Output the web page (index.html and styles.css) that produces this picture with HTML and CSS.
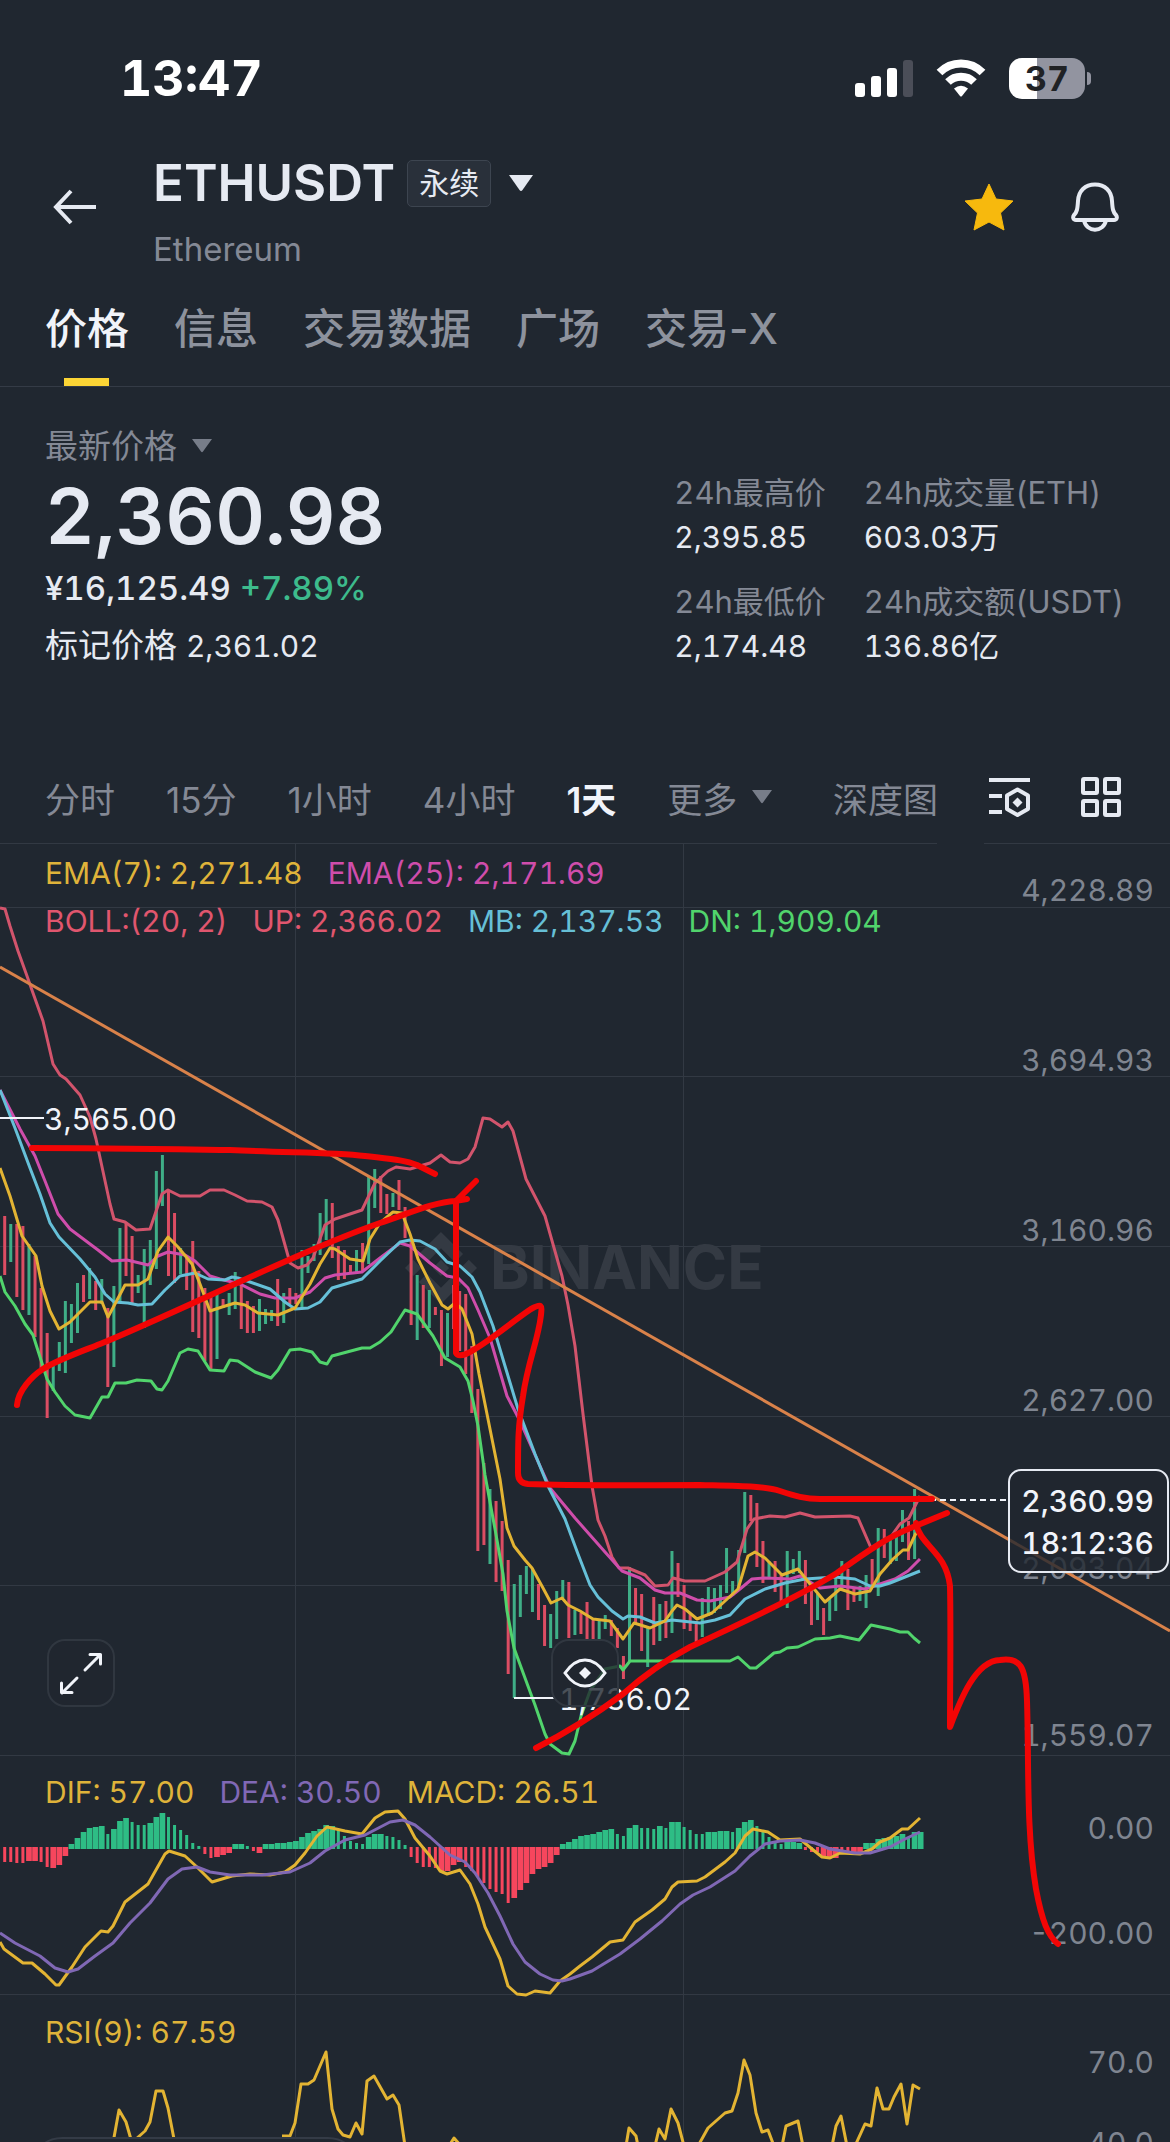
FILE: index.html
```
<!DOCTYPE html>
<html lang="zh-CN">
<head>
  <meta charset="UTF-8">
  <meta name="viewport" content="width=device-width, initial-scale=1.0">
  <title>ETHUSDT 永续</title>
  <link rel="stylesheet" href="styles.css">
</head>
<body>
  <div class="status-bar">
    <span class="clock">13:47</span>
    <div class="status-icons">
      <svg class="signal" viewBox="0 0 58 38" width="58" height="38">
        <rect x="0" y="24" width="10" height="14" rx="3" fill="#fff"/>
        <rect x="16" y="17" width="10" height="21" rx="3" fill="#fff"/>
        <rect x="32" y="9" width="10" height="29" rx="3" fill="#fff"/>
        <rect x="48" y="1" width="10" height="37" rx="3" fill="#4b4e58"/>
      </svg>
      <svg class="wifi" viewBox="0 0 52 38" width="52" height="38">
        <path d="M4.500 13.500 A30 30 0 0 1 47.500 13.500" fill="none" stroke="#fff" stroke-width="8"/>
        <path d="M13 23 A18.500 18.500 0 0 1 39 23" fill="none" stroke="#fff" stroke-width="8"/>
        <path d="M19 29.500 Q26 24 33 29.500 L27 37 Q26 38 25 37 Z" fill="#fff"/>
      </svg>
      <div class="battery"><span>37</span></div>
    </div>
  </div>

  <header class="header">
    <button class="icon-btn" aria-label="返回">
      <svg viewBox="0 0 44 36" width="44" height="36" fill="none" stroke="#e6eaf2" stroke-width="4">
        <path d="M43 18 H3 M18 2 L3 18 L18 34"/>
      </svg>
    </button>
    <div class="pair">
      <div class="pair-row">
        <h1>ETHUSDT</h1>
        <span class="badge">永续</span>
        <svg class="pair-arrow" viewBox="0 0 26 18" width="26" height="18"><path d="M1 1 H25 L14.500 16 Q13 18 11.500 16 Z" fill="#e6eaf2"/></svg>
      </div>
      <p class="pair-name">Ethereum</p>
    </div>
    <div class="header-actions">
      <button class="icon-btn" aria-label="收藏">
        <svg viewBox="0 0 50 50" width="50" height="50">
          <path d="M25 2 L32 17 L49 19 L36.500 31 L40 48 L25 40 L10 48 L13.500 31 L1 19 L18 17 Z" fill="#f7b90d" stroke="#f7b90d" stroke-width="1" stroke-linejoin="round"/>
        </svg>
      </button>
      <button class="icon-btn" aria-label="提醒">
        <svg viewBox="0 0 48 50" width="48" height="50" fill="none" stroke="#e6eaf2" stroke-width="4" stroke-linejoin="round">
          <path d="M24 2.500 C14 2.500 7.500 9 7 19 C6.500 27 6 30 3 33 C1.500 35 2 38 5 38 H43 C46 38 46.500 35 45 33 C42 30 41.500 27 41 19 C40.500 9 34 2.500 24 2.500 Z"/>
          <path d="M13 38 C15 51 33 51 35 38"/>
        </svg>
      </button>
    </div>
  </header>

  <nav class="tabs">
    <a class="active" href="#">价格</a>
    <a href="#">信息</a>
    <a href="#">交易数据</a>
    <a href="#">广场</a>
    <a href="#">交易-X</a>
  </nav>

  <section class="summary">
    <div class="price-block">
      <button class="price-type">最新价格 <svg viewBox="0 0 22 14" width="22" height="14"><path d="M1 0 H21 L12 12.500 Q11 14 10 12.500 Z" fill="#777d89"/></svg></button>
      <div class="price">2,360.98</div>
      <div class="fiat">¥16,125.49 <span class="up">+7.89%</span></div>
      <div class="mark"><span>标记价格</span> <span class="num">2,361.02</span></div>
    </div>
    <dl class="stats">
      <div><dt>24h最高价</dt><dd>2,395.85</dd></div>
      <div><dt>24h成交量(ETH)</dt><dd>603.03万</dd></div>
      <div><dt>24h最低价</dt><dd>2,174.48</dd></div>
      <div><dt>24h成交额(USDT)</dt><dd>136.86亿</dd></div>
    </dl>
  </section>

  <div class="intervals">
    <button>分时</button>
    <button>15分</button>
    <button>1小时</button>
    <button>4小时</button>
    <button class="active">1天</button>
    <button class="more">更多 <svg viewBox="0 0 22 14" width="22" height="14"><path d="M1 0 H21 L12 12.500 Q11 14 10 12.500 Z" fill="#777d89"/></svg></button>
    <button class="depth">深度图</button>
    <div class="tools">
      <button aria-label="指标设置">
        <svg viewBox="0 0 42 40" width="42" height="40" fill="none" stroke="#e6eaf2" stroke-width="4">
          <path d="M0 3 H41 M0 19 H13 M0 35 H13"/>
          <path d="M28.500 12.500 L39 18.500 V32 L28.500 38 L18 32 V18.500 Z" stroke-linejoin="round"/>
          <path d="M28.500 20.500 L33.500 25.500 L28.500 30.500 L23.500 25.500 Z" fill="#e6eaf2" stroke="none"/>
        </svg>
      </button>
      <button aria-label="布局">
        <svg viewBox="0 0 40 40" width="40" height="40" fill="none" stroke="#e6eaf2" stroke-width="4">
          <rect x="2" y="2" width="14" height="14" rx="1"/><rect x="24" y="2" width="14" height="14" rx="1"/>
          <rect x="2" y="24" width="14" height="14" rx="1"/><rect x="24" y="24" width="14" height="14" rx="1"/>
        </svg>
      </button>
    </div>
  </div>

  <main class="chart">
    <svg class="plot" viewBox="0 842 1170 1300">
      <g class="grid">
        <path d="M0 842.500 H937 M984 842.500 H1170 M0 906.500 H1170 M0 1075.500 H1170 M0 1245.500 H1170 M0 1415.500 H1170 M0 1584.500 H1170 M0 1754.500 H1170 M0 1993.500 H1170"/>
        <path d="M295.500 842 V2142 M683.500 842 V2142"/>
      </g>

      <g class="watermark">
        <path transform="translate(405 1231) scale(3)" d="M16.624 13.920l2.717 2.715-7.353 7.353-7.353-7.352 2.717-2.716 4.636 4.659 4.636-4.659zm4.637-4.636L24 12l-2.715 2.716L18.568 12l2.693-2.716zm-9.272 0l2.716 2.692-2.716 2.717L9.272 12l2.717-2.716zm-9.273 0L5.409 12l-2.691 2.692L0 12l2.716-2.716zM11.988.011l7.353 7.329-2.717 2.715-4.636-4.635-4.635 4.659-2.718-2.715 7.353-7.353z"/>
        <text x="490" y="1288">BINANCE</text>
      </g>

      <g class="axis">
        <text x="1154" y="900">4,228.89</text>
        <text x="1154" y="1070">3,694.93</text>
        <text x="1154" y="1240">3,160.96</text>
        <text x="1154" y="1410">2,627.00</text>
        <text x="1154" y="1578">2,093.04</text>
        <text x="1154" y="1745">1,559.07</text>
        <text x="1154" y="1838">0.00</text>
        <text x="1154" y="1943">-200.00</text>
        <text x="1154" y="2072">70.0</text>
        <text x="1154" y="2153">40.0</text>
      </g>

      <g id="candles"></g>
      <g id="macd"></g>

      <polyline class="line up-band" points="0,907 5,908 10,925 18,950 27,975 33,992 43,1020 53,1063 60,1074 66,1078 80,1094 90,1116 96,1138 110,1203 114,1218 125,1221 136,1229 150,1228 162,1193 168,1189 180,1195 200,1195 210,1189 224,1189 235,1194 247,1200 262,1201 272,1206 278,1219 290,1262 298,1267 307,1264 313,1257 325,1224 335,1218 362,1209 375,1182 388,1170 396,1166 410,1168 430,1162 441,1154 450,1161 460,1162 468,1158 475,1146 483,1117 490,1118 502,1126 508,1121 513,1130 526,1178 545,1215 562,1275 568,1304 575,1345 583,1413 592,1485 598,1519 605,1535 612,1556 619,1567 628,1567 645,1574 655,1585 668,1584 673,1577 685,1580 705,1580 725,1571 737,1561 747,1528 754,1518 770,1515 785,1516 800,1512 815,1516 850,1515 858,1517 871,1547 890,1537 900,1523 909,1517 916,1503 920,1495"/>
      <polyline class="line down-band" points="0,1275 5,1291 15,1305 25,1323 33,1334 40,1356 47,1378 55,1391 65,1405 75,1414 90,1417 102,1396 108,1396 115,1382 126,1382 137,1379 151,1380 157,1388 162,1389 168,1380 180,1352 188,1348 198,1350 210,1369 224,1370 230,1359 238,1360 255,1371 271,1377 278,1369 290,1349 300,1348 312,1351 320,1361 327,1363 332,1355 362,1347 370,1347 380,1341 391,1331 405,1309 417,1313 433,1335 445,1357 460,1366 468,1380 473,1400 478,1425 485,1474 495,1528 503,1573 507,1610 514,1647 525,1677 535,1704 545,1733 550,1743 562,1752 569,1753 575,1740 581,1715 590,1690 605,1668 620,1665 623,1669 630,1660 730,1660 738,1656 750,1667 756,1667 774,1652 780,1651 787,1647 798,1646 815,1638 830,1637 840,1635 859,1639 871,1624 890,1628 900,1631 908,1631 914,1637 920,1642"/>
      <polyline class="line ema25" points="0,1089 20,1128 35,1155 45,1180 58,1213 70,1228 98,1249 112,1260 127,1259 148,1264 158,1255 168,1251 185,1254 195,1260 210,1275 220,1278 240,1283 260,1293 275,1297 295,1297 310,1291 325,1277 335,1274 362,1271 380,1257 400,1242 410,1245 430,1262 447,1275 458,1277 468,1287 478,1309 490,1337 507,1395 519,1418 540,1465 550,1487 575,1517 605,1551 622,1570 640,1577 655,1589 665,1592 680,1592 697,1599 710,1600 730,1596 740,1588 752,1578 765,1577 790,1578 800,1575 820,1587 840,1585 865,1588 880,1583 895,1578 908,1570 920,1558"/>
      <polyline class="line mid-band" points="0,1089 15,1127 30,1167 40,1193 50,1222 59,1236 80,1258 95,1276 105,1293 114,1301 128,1302 138,1304 152,1303 165,1289 180,1275 195,1272 208,1278 225,1279 232,1276 238,1277 250,1281 270,1288 285,1301 295,1308 308,1307 320,1301 332,1287 362,1278 380,1260 400,1241 410,1239 420,1240 435,1248 447,1261 460,1265 472,1276 480,1291 493,1325 505,1365 518,1408 535,1453 548,1485 565,1518 578,1553 590,1584 598,1596 612,1610 623,1618 628,1615 640,1616 655,1622 672,1619 700,1622 715,1619 730,1614 745,1598 765,1588 785,1582 805,1578 835,1576 855,1578 870,1585 880,1585 890,1582 905,1576 920,1570"/>
      <polyline class="line ema7" points="0,1167 10,1195 22,1235 36,1255 42,1285 50,1310 59,1328 70,1321 90,1301 102,1301 108,1316 115,1303 125,1284 138,1284 148,1278 158,1250 168,1236 178,1246 192,1263 200,1283 210,1310 222,1306 235,1302 245,1304 258,1312 278,1314 295,1307 310,1283 320,1263 330,1247 335,1248 350,1258 363,1260 370,1238 380,1222 393,1211 402,1212 410,1233 418,1258 430,1282 442,1304 448,1308 455,1302 462,1308 472,1333 479,1373 491,1433 500,1478 507,1527 514,1545 525,1559 532,1567 543,1587 551,1602 562,1597 568,1604 580,1610 593,1618 610,1620 623,1638 634,1622 650,1627 665,1620 672,1610 677,1604 685,1608 697,1618 712,1612 725,1600 738,1588 748,1555 755,1551 765,1557 782,1574 798,1568 810,1583 825,1601 840,1588 855,1593 870,1590 880,1573 893,1558 903,1549 908,1549 916,1532"/>

      <polyline class="line ema7" points="0,1941 4,1948 23,1962 32,1962 45,1973 56,1984 59,1984 72,1966 85,1946 101,1930 108,1931 113,1925 125,1901 148,1883 165,1853 169,1850 185,1855 197,1866 212,1881 232,1875 250,1873 270,1874 285,1871 295,1864 305,1852 317,1835 327,1826 345,1830 362,1833 375,1817 385,1811 398,1810 405,1818 415,1837 430,1855 440,1870 447,1873 460,1869 470,1883 478,1903 485,1926 500,1958 508,1985 517,1993 526,1994 535,1990 550,1992 560,1980 570,1973 580,1965 592,1956 610,1941 623,1939 635,1921 652,1909 665,1898 672,1886 678,1881 697,1880 705,1876 725,1861 735,1852 745,1835 753,1828 768,1831 780,1839 800,1838 812,1848 822,1856 830,1857 840,1852 860,1853 872,1848 880,1841 890,1837 902,1828 908,1828 920,1817"/>
      <polyline class="line dea" points="0,1932 15,1942 40,1955 55,1967 68,1971 78,1968 95,1955 113,1942 130,1922 150,1902 168,1878 182,1868 197,1866 210,1871 230,1874 262,1874 290,1871 310,1862 325,1850 345,1839 365,1834 390,1821 403,1819 415,1824 430,1836 450,1854 465,1861 475,1872 488,1892 500,1915 513,1943 525,1961 540,1973 553,1979 562,1980 570,1978 592,1970 620,1953 640,1938 662,1920 680,1903 693,1894 710,1886 735,1870 750,1855 765,1843 780,1840 800,1839 815,1842 830,1848 855,1852 870,1852 890,1846 905,1838 920,1831"/>
      <path class="line ema7" d="M113 2142 L119 2109 L126 2121 L132 2142 M136 2138 L145 2130 L150 2121 L156 2090 L163 2090 L168 2107 L174 2138 M282 2135 H290 L295 2122 L301 2083 L308 2083 L314 2079 L326 2051 L332 2108 L338 2128 L343 2134 L350 2136 L356 2122 L362 2133 L367 2080 L374 2075 L387 2098 L393 2094 L399 2104 L405 2145 M449 2145 L454 2137 L461 2145 M626 2145 L629 2127 L636 2135 L638 2145 M655 2145 L659 2128 L665 2138 L671 2108 L678 2122 L684 2145 M698 2145 L708 2127 L725 2112 L732 2110 L738 2092 L744 2059 L750 2074 L756 2112 L762 2131 L768 2129 L774 2145 M782 2145 L786 2125 L798 2120 L803 2145 M832 2145 L836 2125 L841 2115 L847 2145 M855 2145 L865 2123 L871 2125 L877 2087 L883 2108 L889 2108 L894 2096 L901 2083 L907 2123 L913 2084 L920 2088"/>

      <path class="trend" d="M0 966 L1170 1630"/>

      <g class="marker">
        <path d="M0 1117 H44 M514 1697 H554"/>
        <text x="44" y="1129">3,565.00</text>
        <text x="559" y="1709">1,736.02</text>
      </g>

      <path class="last-line" d="M930 1499 H1008"/>
      <g class="last-price">
        <rect x="1009" y="1469" width="159" height="102" rx="12"/>
        <text x="1154" y="1511">2,360.99</text>
        <text x="1154" y="1553">18:12:36</text>
      </g>
      <rect class="sheet" x="36" y="2137" width="318" height="40" rx="26"/>
    </svg>

    <div class="legend legend-main">
      <div><span class="c-yellow">EMA(7): 2,271.48</span><span class="c-pink">EMA(25): 2,171.69</span></div>
      <div><span class="c-red">BOLL:(20, 2)</span><span class="c-red">UP: 2,366.02</span><span class="c-cyan">MB: 2,137.53</span><span class="c-green">DN: 1,909.04</span></div>
    </div>
    <div class="legend legend-macd">
      <div><span class="c-yellow">DIF: 57.00</span><span class="c-purple">DEA: 30.50</span><span class="c-yellow">MACD: 26.51</span></div>
    </div>
    <div class="legend legend-rsi">
      <div><span class="c-yellow">RSI(9): 67.59</span></div>
    </div>

    <button class="chart-btn expand-btn" aria-label="全屏">
      <svg viewBox="0 0 68 68" width="68" height="68" fill="none" stroke="#f1f4fa" stroke-width="3" stroke-linecap="round" stroke-linejoin="round">
        <path d="M38 31 L53 16 M43 15.500 H53.500 V25 M30 39 L15 54 M14.500 44 V53.500 H25"/>
      </svg>
    </button>
    <button class="chart-btn eye-btn" aria-label="显示">
      <svg viewBox="0 0 68 68" width="68" height="68" fill="none" stroke="#f1f4fa" stroke-width="3">
        <path d="M14 34 Q23 21 34 21 Q45 21 54 34 Q45 47 34 47 Q23 47 14 34 Z"/>
        <path d="M34 28 L40 34 L34 40 L28 34 Z" fill="#f1f4fa" stroke="none"/>
      </svg>
    </button>

    <!-- hand drawn notes, above everything else -->
    <svg class="notes" viewBox="0 842 1170 1300">
      <path d="M32 1147 C100 1147 160 1148 230 1149 C290 1152 330 1151 365 1155 C390 1158 405 1159 417 1164 L435 1173"/>
      <path d="M17 1404 C18 1390 32 1375 43 1368 C55 1360 80 1351 100 1343 C180 1310 300 1250 380 1222 C410 1212 435 1201 455 1200 L467 1198 M456 1200 L476 1180"/>
      <path d="M456 1200 V1352 Q458 1356 466 1353 C485 1344 510 1322 531 1308 C542 1302 542 1304 541 1314 C538 1340 528 1360 523 1395 C518 1425 518 1440 518 1472 Q518 1482 528 1483 C580 1485 640 1484 700 1484 C740 1485 765 1485 780 1490 C795 1495 805 1498 820 1498 H932"/>
      <path d="M536 1747 C570 1730 600 1710 623 1693 C640 1678 660 1662 690 1646 C740 1623 800 1595 837 1572 C870 1548 890 1535 913 1526 L947 1512"/>
      <path d="M916 1522 C920 1545 946 1550 950 1585 C951 1630 950 1680 950 1726 C960 1700 975 1660 1000 1659 C1020 1656 1026 1665 1027 1700 C1029 1760 1026 1830 1036 1888 C1042 1920 1048 1935 1058 1943"/>
    </svg>
  </main>

  <script src="chart.js"></script>
</body>
</html>
```
FILE: styles.css
```
* {
  box-sizing: border-box;
}

body {
  margin: 0;
  background-color: #202730;
  color: #e6eaf2;
  font-family: Inter, "Noto Sans CJK SC", sans-serif;
  font-size: 30px;
  font-variant-numeric: tabular-nums;
}

h1, p, dl, dd {
  margin: 0;
}

button {
  padding: 0;
  border: none;
  background: none;
  color: inherit;
  font: inherit;
}

svg {
  display: block;
}

/* status bar */
.status-bar {
  display: flex;
  justify-content: space-between;
  align-items: center;
  height: 156px;
  padding: 0 79px 0 120px;
}

.clock {
  font-size: 50px;
  font-weight: 700;
  color: #fff;
}

.status-icons {
  display: flex;
  align-items: center;
  gap: 22px;
}

.battery {
  position: relative;
  width: 76px;
  height: 41px;
  margin-right: 6px;
  border-radius: 13px;
  background: linear-gradient(to right, #fff 37%, #9294a0 37%);
  color: #202225;
  font-size: 34px;
  font-weight: 700;
  line-height: 41px;
  text-align: center;
}

.battery::after {
  content: "";
  position: absolute;
  right: -6px;
  top: 14px;
  width: 4px;
  height: 13px;
  border-radius: 0 5px 5px 0;
  background-color: #9294a0;
}

/* header */
.header {
  display: flex;
  align-items: flex-start;
  height: 120px;
  padding: 0 51px 0 53px;
}

.icon-btn {
  display: flex;
  align-items: center;
  height: 102px;
}

.pair {
  margin-left: 56px;
}

.pair-row {
  display: flex;
  align-items: center;
  height: 54px;
}

.pair h1 {
  font-size: 51px;
  font-weight: 600;
  line-height: 54px;
}

.badge {
  margin: 0 17px 0 12px;
  padding: 0 11px;
  border: 1px solid #3d4550;
  border-radius: 5px;
  background-color: #29303a;
  font-size: 30px;
  line-height: 45px;
}

.pair-name {
  margin-top: 19px;
  color: #848995;
  font-size: 33px;
  line-height: 40px;
}

.header-actions {
  display: flex;
  gap: 57px;
  margin-left: auto;
}

/* tabs */
.tabs {
  display: flex;
  gap: 45px;
  height: 111px;
  padding: 0 45px;
  border-bottom: 1px solid #343b46;
  font-variant-numeric: normal;
}

.tabs a {
  position: relative;
  color: #8d929d;
  font-size: 42px;
  font-weight: 500;
  line-height: 106px;
  text-decoration: none;
}

.tabs .active {
  color: #f1f4fa;
}

.tabs .active::after {
  content: "";
  position: absolute;
  left: 50%;
  bottom: 0;
  width: 45px;
  height: 8px;
  margin-left: -23px;
  background-color: #fcd535;
}

/* price summary */
.summary {
  display: flex;
  justify-content: space-between;
  padding: 39px 46px 87px 45px;
}

.price-type {
  display: flex;
  align-items: center;
  gap: 14px;
  color: #848995;
  font-size: 33px;
  line-height: 40px;
}

.price {
  font-size: 77px;
  font-weight: 600;
  line-height: 100px;
}

.fiat {
  font-size: 33px;
  font-weight: 500;
  line-height: 44px;
}

.up {
  color: #3dbb8c;
}

.mark {
  margin-top: 13px;
  font-size: 33px;
  line-height: 44px;
}

.mark .num {
  font-size: 30px;
}

.stats {
  display: grid;
  grid-template-columns: auto auto;
  gap: 21px 38px;
  align-self: flex-end;
}

.stats dt {
  color: #848995;
  font-size: 31px;
  line-height: 44px;
}

.stats dd {
  font-size: 30px;
  line-height: 44px;
}

/* interval bar */
.intervals {
  display: flex;
  align-items: center;
  gap: 51px;
  height: 88px;
  padding: 0 49px 4px 45px;
  color: #848995;
  font-size: 35px;
  font-variant-numeric: normal;
  white-space: nowrap;
}

.intervals .active {
  color: #f1f4fa;
  font-weight: 600;
}

.intervals .more {
  display: flex;
  align-items: center;
  gap: 14px;
}

.intervals .depth {
  margin-left: auto;
}

.tools {
  display: flex;
  gap: 50px;
}

/* chart */
.chart {
  position: relative;
  overflow: hidden;
}

.plot,
.notes {
  width: 100%;
  height: auto;
}

.notes {
  position: absolute;
  left: 0;
  top: 0;
  fill: none;
  stroke: #f20505;
  stroke-width: 6;
  stroke-linejoin: round;
  stroke-linecap: round;
  pointer-events: none;
}

.grid {
  fill: none;
  stroke: #323943;
}

.watermark {
  fill: #343a43;
}

.watermark text {
  font-size: 60px;
  font-weight: 700;
}

.axis {
  fill: #7f8590;
  text-anchor: end;
}

.line {
  fill: none;
  stroke-width: 3;
  stroke-linejoin: round;
}

.up-band { stroke: #d2546c; }
.down-band { stroke: #51d46c; }
.mid-band { stroke: #66c0d8; }
.ema7 { stroke: #e3b433; }
.ema25 { stroke: #cf4dab; }
.dea { stroke: #8068b5; }

.candle-up { fill: #3fae87; }
.candle-down { fill: #dc4d63; }
.bar-up { fill: #2ebd85; }
.bar-down { fill: #f6465d; }

.trend {
  stroke: #d9824a;
  stroke-width: 3;
}

.marker {
  fill: #f1f4fa;
}

.marker path {
  stroke: #f1f4fa;
  stroke-width: 2;
}

.last-line {
  stroke: #f1f4fa;
  stroke-width: 2;
  stroke-dasharray: 6 4;
}

.last-price {
  fill: #f1f4fa;
  font-weight: 500;
  text-anchor: end;
}

.last-price rect {
  fill: #202730;
  fill-opacity: 0.8;
  stroke: #e6eaf2;
  stroke-width: 2;
}

.sheet {
  fill: #202730;
  stroke: #343b46;
  stroke-width: 2;
}

.legend {
  position: absolute;
  left: 45px;
  line-height: 48px;
}

.legend div {
  display: flex;
  gap: 25px;
  white-space: nowrap;
}

.legend-main { top: 6px; }
.legend-macd { top: 925px; }
.legend-rsi { top: 1165px; }

.c-yellow { color: #dfb33a; }
.c-pink { color: #cf4dab; }
.c-red { color: #e0566e; }
.c-cyan { color: #66bfd6; }
.c-green { color: #51d46c; }
.c-purple { color: #8068b5; }

.chart-btn {
  position: absolute;
  top: 796px;
  width: 68px;
  height: 68px;
  border-radius: 18px;
  background-color: rgba(32, 39, 48, 0.8);
  box-shadow: inset 0 0 0 2px #303740;
}

.expand-btn { left: 47px; }

.eye-btn {
  left: 50%;
  margin-left: -34px;
}
```
FILE: chart.js
```
// daily bars: [high y, low y, 1 = up / 0 = down]
const candles = [
  [1215,1274,0],[1223,1261,1],[1223,1296,0],[1225,1309,0],[1243,1314,1],[1255,1336,0],[1287,1367,0],[1332,1417,0],[1362,1390,1],[1341,1370,1],
  [1300,1372,1],[1303,1342,1],[1282,1332,1],[1274,1301,0],[1267,1298,1],[1280,1309,0],[1278,1303,1],[1307,1386,0],[1285,1366,1],[1227,1300,1],
  [1222,1275,0],[1235,1303,0],[1274,1292,1],[1248,1327,1],[1239,1284,1],[1170,1268,1],[1154,1205,1],[1190,1275,0],[1212,1282,0],[1247,1273,1],
  [1255,1289,0],[1240,1331,0],[1270,1337,0],[1287,1360,0],[1293,1368,0],[1293,1358,1],[1298,1307,0],[1292,1314,1],[1271,1308,1],[1277,1328,0],
  [1300,1332,0],[1305,1332,0],[1298,1330,1],[1308,1323,1],[1309,1320,1],[1278,1325,0],[1292,1322,1],[1287,1303,0],[1292,1303,0],[1249,1307,1],
  [1255,1272,1],[1243,1260,1],[1212,1254,1],[1198,1239,1],[1202,1257,0],[1245,1279,0],[1249,1278,0],[1264,1273,0],[1249,1273,1],[1242,1270,0],
  [1175,1263,1],[1168,1207,1],[1175,1212,0],[1193,1213,0],[1192,1206,1],[1179,1209,0],[1206,1237,0],[1240,1324,0],[1274,1339,1],[1284,1327,0],
  [1289,1327,1],[1306,1314,0],[1309,1365,0],[1312,1356,1],[1284,1328,0],[1290,1350,0],[1293,1373,0],[1345,1412,0],[1388,1550,0],[1462,1544,0],
  [1488,1563,1],[1500,1581,0],[1520,1590,0],[1559,1673,0],[1583,1697,1],[1574,1616,1],[1565,1593,1],[1567,1611,1],[1583,1619,0],[1604,1645,0],
  [1613,1647,1],[1590,1638,1],[1579,1597,1],[1581,1637,0],[1609,1634,1],[1612,1633,0],[1601,1638,0],[1617,1638,0],[1620,1638,1],[1614,1628,1],
  [1619,1635,0],[1627,1647,0],[1655,1678,0],[1566,1660,1],[1587,1622,0],[1593,1650,0],[1627,1666,1],[1596,1644,0],[1603,1640,1],[1600,1637,0],
  [1550,1632,1],[1562,1596,0],[1584,1628,0],[1612,1630,0],[1620,1642,0],[1597,1636,1],[1586,1615,1],[1587,1612,1],[1584,1608,1],[1547,1592,1],
  [1580,1595,1],[1549,1588,1],[1491,1552,1],[1494,1520,0],[1502,1566,0],[1540,1582,0],[1560,1577,1],[1560,1591,0],[1572,1600,0],[1550,1607,1],
  [1558,1573,1],[1550,1572,1],[1559,1603,0],[1586,1624,0],[1593,1619,1],[1607,1634,0],[1597,1620,1],[1575,1610,1],[1560,1590,1],[1568,1609,0],
  [1588,1601,0],[1585,1600,1],[1574,1607,1],[1558,1587,0],[1527,1595,1],[1528,1557,0],[1535,1563,1],[1532,1560,1],[1509,1541,1],[1520,1559,0],
  [1488,1558,1]
];

const macd = ('-15t -15t -16t -16t -14 -14 -15t -20t -21 -18 -9 5 11 17 21 22 23 15t 20 28 31 27t 24t 24t 26 32 36 32t 24t 19t ' +
  '14t 6t 3t -7t -11t -10 -8 -6 5 5 3t -4t -6 5 5 6 6 7 8 12 16 18 20 24 23 20t 13t 8t 6t 5t ' +
  '12 15 15 13t 12t 9t 4t -10t -16t -20t -20t -21t -24 -24 -18 -15 -20t -24t -30t -36t -42t -45t -47t -56t -51 -43 -36 -27 -22 -20 ' +
  '-16 -8 5 7 10 13 14 15 17 19 20 15t 13t 21 24 21t 21t 20t 23 21t 27 27 22t 19t 15t 15t 17 17 18 18 ' +
  '17t 21 27 29 23t 18t 12t 8t 5t 7 7 6 -3t -5t -5t -9 -11 -11 -5t -5t -6 -6 6 6 10 11 12 13 15 12t 17 17').split(' ');

const STEP = 6.066;
const FIRST = 4.7;
const ZERO = 1848;

function addRect(parent, x, y, width, height, cls) {
  const rect = document.createElementNS('http://www.w3.org/2000/svg', 'rect');
  rect.setAttribute('x', x);
  rect.setAttribute('y', y);
  rect.setAttribute('width', width);
  rect.setAttribute('height', height);
  rect.setAttribute('class', cls);
  parent.appendChild(rect);
}

const candleGroup = document.getElementById('candles');
candles.forEach(function ([high, low, up], i) {
  addRect(candleGroup, FIRST + STEP * i - 1.5, high, 3, low - high, up ? 'candle-up' : 'candle-down');
});

const macdGroup = document.getElementById('macd');
macd.forEach(function (item, i) {
  const value = parseInt(item);
  const width = item.endsWith('t') ? 3 : 5.7;
  const top = value > 0 ? ZERO - value : ZERO - 2;
  addRect(macdGroup, FIRST + STEP * i - width / 2, top, width, Math.abs(value), value > 0 ? 'bar-up' : 'bar-down');
});
```
